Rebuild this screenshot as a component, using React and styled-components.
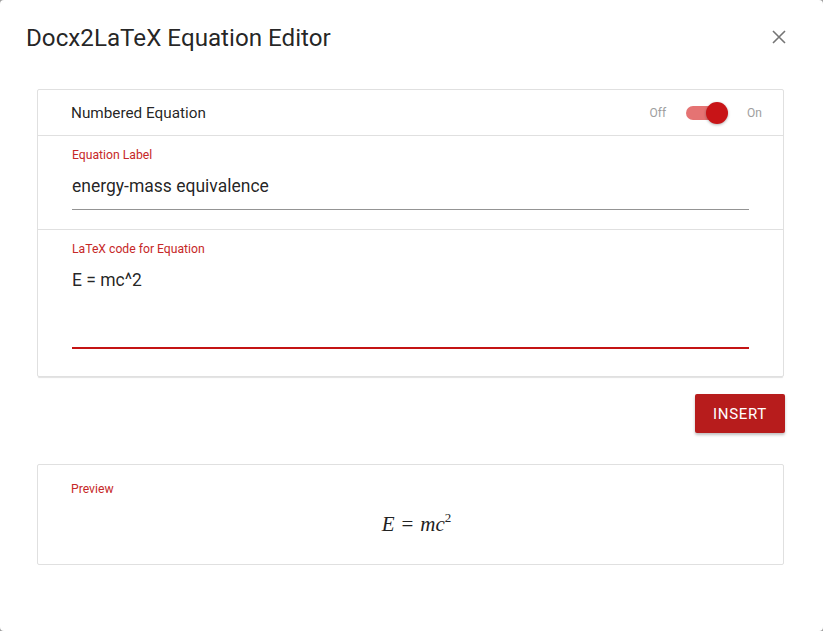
import React, { useState } from "react";
import styled, { createGlobalStyle } from "styled-components";

const GlobalStyle = createGlobalStyle`
  html, body {
    margin: 0;
    padding: 0;
    background: #9e9e9e;
  }
  body {
    font-family: Roboto, "Liberation Sans", Arial, sans-serif;
  }
  * { box-sizing: border-box; }
`;

const Dialog = styled.div`
  width: 823px;
  height: 631px;
  background: #fff;
  border-radius: 4px;
  display: flex;
  flex-direction: column;
`;

const DialogHeader = styled.div`
  display: flex;
  justify-content: space-between;
  align-items: center;
  padding: 22px 34px 0 26px;
  height: 54px;
`;

const Title = styled.h2`
  margin: 0;
  font-size: 24.2px;
  font-weight: 400;
  line-height: 32px;
  color: rgba(0, 0, 0, 0.87);
`;

const CloseButton = styled.button`
  border: none;
  background: none;
  padding: 0;
  width: 20px;
  height: 20px;
  display: flex;
  align-items: center;
  justify-content: center;
  cursor: pointer;
  margin-top: -2px;
`;

const Content = styled.div`
  display: flex;
  flex-direction: column;
  padding: 35px 39px 0 37px;
`;

const Card = styled.div`
  border: 1px solid #e0e0e0;
  border-radius: 2px;
  background: #fff;
  box-shadow: ${(p) => (p.raised ? "0 2px 1px -1px rgba(0,0,0,0.12)" : "none")};
`;

const ToggleRow = styled.div`
  height: 46px;
  display: flex;
  align-items: center;
  justify-content: space-between;
  padding: 0 21px 0 33px;
  border-bottom: 1px solid #e0e0e0;
`;

const RowTitle = styled.span`
  font-size: 15.3px;
  color: rgba(0, 0, 0, 0.87);
`;

const SwitchGroup = styled.div`
  display: flex;
  align-items: center;
`;

const SwitchText = styled.span`
  font-size: 12px;
  color: #9e9e9e;
`;

const Track = styled.button`
  position: relative;
  width: 38px;
  height: 14px;
  border-radius: 7px;
  border: none;
  padding: 0;
  margin: 0 23px 0 20px;
  background: ${(p) => (p.on ? "#e57373" : "#bdbdbd")};
  cursor: pointer;
`;

const Thumb = styled.span`
  position: absolute;
  top: -4px;
  left: ${(p) => (p.on ? "20px" : "-4px")};
  width: 22px;
  height: 22px;
  border-radius: 50%;
  background: ${(p) => (p.on ? "#c81417" : "#fafafa")};
  box-shadow: 0 1px 3px rgba(0, 0, 0, 0.3);
`;

const Field = styled.div`
  padding: ${(p) => p.pad};
  border-bottom: ${(p) => (p.last ? "none" : "1px solid #e0e0e0")};
`;

const FieldLabel = styled.div`
  font-size: 12.2px;
  line-height: 14px;
  color: #c62828;
`;

const TextInput = styled.input`
  display: block;
  width: 100%;
  border: none;
  border-bottom: 1px solid #949494;
  outline: none;
  font-family: inherit;
  font-size: 17.5px;
  line-height: 20px;
  color: rgba(0, 0, 0, 0.87);
  padding: 14px 0 13px 0;
  background: transparent;
`;

const TextArea = styled.textarea`
  display: block;
  width: 100%;
  height: 93px;
  border: none;
  border-bottom: 2px solid #c41414;
  outline: none;
  resize: none;
  font-family: inherit;
  font-size: 17.5px;
  line-height: 20px;
  color: rgba(0, 0, 0, 0.87);
  padding: 14px 0 0 0;
  background: transparent;
`;

const Actions = styled.div`
  display: flex;
  justify-content: flex-end;
  padding: 17px 0 31px;
  margin-right: -1px;
`;

const InsertButton = styled.button`
  width: 90px;
  height: 39px;
  border: none;
  border-radius: 2px;
  background: #b71c1c;
  color: #fff;
  font-family: inherit;
  font-size: 15px;
  letter-spacing: 0.7px;
  text-transform: uppercase;
  box-shadow: 0 2px 3px rgba(0, 0, 0, 0.25);
  cursor: pointer;
`;

const PreviewBody = styled.div`
  height: 99px;
  padding: 17px 0 0 33px;
  display: flex;
  flex-direction: column;
`;

const Equation = styled.div`
  font-family: "Liberation Serif", "Times New Roman", serif;
  font-size: 21px;
  color: #222;
  text-align: center;
  margin-top: 16px;
  margin-left: -33px;
  padding-left: 12px;
`;

const Var = styled.i`
  font-style: italic;
`;

const Op = styled.span`
  margin: 0 7px;
`;

const Sup = styled.sup`
  font-size: 13px;
  vertical-align: 9px;
  line-height: 0;
`;

export default function App() {
  const [numbered, setNumbered] = useState(true);
  const [label, setLabel] = useState("energy-mass equivalence");
  const [code, setCode] = useState("E = mc^2");

  return (
    <>
      <GlobalStyle />
      <Dialog>
        <DialogHeader>
          <Title>Docx2LaTeX Equation Editor</Title>
          <CloseButton aria-label="Close">
            <svg width="14" height="14" viewBox="0 0 14 14">
              <path
                d="M1 1 L13 13 M13 1 L1 13"
                stroke="#757575"
                strokeWidth="1.6"
                fill="none"
              />
            </svg>
          </CloseButton>
        </DialogHeader>
        <Content>
          <Card raised>
            <ToggleRow>
              <RowTitle>Numbered Equation</RowTitle>
              <SwitchGroup>
                <SwitchText>Off</SwitchText>
                <Track on={numbered} onClick={() => setNumbered(!numbered)}>
                  <Thumb on={numbered} />
                </Track>
                <SwitchText>On</SwitchText>
              </SwitchGroup>
            </ToggleRow>
            <Field pad="12px 34px 19px 34px">
              <FieldLabel>Equation Label</FieldLabel>
              <TextInput
                value={label}
                onChange={(e) => setLabel(e.target.value)}
              />
            </Field>
            <Field pad="12px 34px 27px 34px" last>
              <FieldLabel>LaTeX code for Equation</FieldLabel>
              <TextArea value={code} onChange={(e) => setCode(e.target.value)} />
            </Field>
          </Card>
          <Actions>
            <InsertButton>Insert</InsertButton>
          </Actions>
          <Card>
            <PreviewBody>
              <FieldLabel>Preview</FieldLabel>
              <Equation>
                <Var>E</Var>
                <Op>=</Op>
                <Var>mc</Var>
                <Sup>2</Sup>
              </Equation>
            </PreviewBody>
          </Card>
        </Content>
      </Dialog>
    </>
  );
}
